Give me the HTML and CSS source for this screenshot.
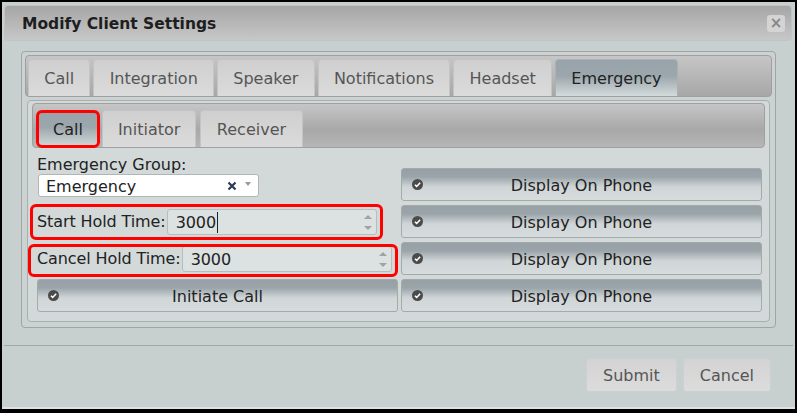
FILE: index.html
```html
<!DOCTYPE html>
<html lang="en">
<head>
  <meta charset="UTF-8">
  <title>Modify Client Settings</title>
  <link rel="stylesheet" href="styles.css">
</head>
<body>

<div class="dialog">
  <div class="titlebar">
    <h1>Modify Client Settings</h1>
    <span class="close">&times;</span>
  </div>

  <div class="tabs">
    <ul class="tab-strip">
      <li>Call</li>
      <li>Integration</li>
      <li>Speaker</li>
      <li>Notifications</li>
      <li>Headset</li>
      <li class="active">Emergency</li>
    </ul>

    <div class="panel">
      <ul class="tab-strip sub">
        <li class="active hl-tab">Call</li>
        <li>Initiator</li>
        <li>Receiver</li>
      </ul>

      <div class="form">
        <div class="group">
          <label>Emergency Group:</label>
          <div class="select">
            <span>Emergency</span>
            <svg class="clear" width="10" height="10" viewBox="0 0 10 10"><path d="M1.5 1.5 8.5 8.5M8.5 1.5 1.5 8.5" stroke="#2b3b52" stroke-width="2.2"/></svg>
            <span class="caret"></span>
          </div>
        </div>
        <button class="btn end">
          <svg class="ico" width="11" height="11" viewBox="0 0 12 12"><circle cx="6" cy="6" r="6" fill="#4b4b4b"/><path d="M3.2 6.3 5.1 8.1 8.9 4.1" fill="none" stroke="#fff" stroke-width="1.7"/></svg>
          <span>Display On Phone</span>
        </button>

        <div class="field hl">
          <label>Start Hold Time:</label>
          <div class="num">
            <span>3000</span><span class="cursor"></span>
            <span class="spin"><i class="up"></i><i class="down"></i></span>
          </div>
        </div>
        <button class="btn">
          <svg class="ico" width="11" height="11" viewBox="0 0 12 12"><circle cx="6" cy="6" r="6" fill="#4b4b4b"/><path d="M3.2 6.3 5.1 8.1 8.9 4.1" fill="none" stroke="#fff" stroke-width="1.7"/></svg>
          <span>Display On Phone</span>
        </button>

        <div class="field hl wide">
          <label>Cancel Hold Time:</label>
          <div class="num">
            <span>3000</span>
            <span class="spin"><i class="up"></i><i class="down"></i></span>
          </div>
        </div>
        <button class="btn">
          <svg class="ico" width="11" height="11" viewBox="0 0 12 12"><circle cx="6" cy="6" r="6" fill="#4b4b4b"/><path d="M3.2 6.3 5.1 8.1 8.9 4.1" fill="none" stroke="#fff" stroke-width="1.7"/></svg>
          <span>Display On Phone</span>
        </button>

        <button class="btn">
          <svg class="ico" width="11" height="11" viewBox="0 0 12 12"><circle cx="6" cy="6" r="6" fill="#4b4b4b"/><path d="M3.2 6.3 5.1 8.1 8.9 4.1" fill="none" stroke="#fff" stroke-width="1.7"/></svg>
          <span>Initiate Call</span>
        </button>
        <button class="btn">
          <svg class="ico" width="11" height="11" viewBox="0 0 12 12"><circle cx="6" cy="6" r="6" fill="#4b4b4b"/><path d="M3.2 6.3 5.1 8.1 8.9 4.1" fill="none" stroke="#fff" stroke-width="1.7"/></svg>
          <span>Display On Phone</span>
        </button>
      </div>
    </div>
  </div>

  <div class="footer">
    <button>Submit</button>
    <button>Cancel</button>
  </div>
</div>

</body>
</html>
```

FILE: styles.css
```css
body {
  margin: 0;
  background: #000;
  font-family: 'DejaVu Sans', sans-serif;
  font-size: 16px;
  color: #222;
}
.dialog {
  margin: 2px;
  width: 793px;
  height: 405px;
  background: #c8cfcf;
  border-bottom: 2px solid #dce1e1;
  overflow: hidden;
}
.titlebar {
  margin: 3px 3px 0 2px;
  height: 36px;
  box-sizing: border-box;
  display: flex;
  align-items: center;
  padding: 1px 6px 0 17px;
  border: 1px solid #bfc5c5;
  border-radius: 4px;
  background: linear-gradient(#a6a6a6, #c7c7c7);
}
.titlebar h1 {
  flex: 1;
  margin: 0;
  font-size: 15.5px;
  font-weight: bold;
  color: #1e1e1e;
}
.close {
  width: 18px;
  height: 17px;
  margin-top: -1px;
  display: flex;
  align-items: center;
  justify-content: center;
  background: #d4d4d4;
  border-radius: 3px;
  color: #868686;
  font-size: 15px;
  font-weight: bold;
  line-height: 1;
}

.tabs {
  margin: 10px 19px 0;
  padding: 3px;
  border: 1px solid #9ea5a5;
  border-radius: 4px;
  background: #ccd2d2;
}
.tab-strip {
  list-style: none;
  margin: 0;
  height: 42px;
  box-sizing: border-box;
  display: flex;
  align-items: stretch;
  gap: 3px;
  padding: 3px 2px 0;
  border: 1px solid #a0a0a0;
  border-radius: 4px;
  background: linear-gradient(#c6c6c6, #a7a7a7);
}
.tab-strip li {
  display: flex;
  align-items: center;
  padding: 1px 15.25px 0;
  border: 1px solid #c4c4c4;
  border-bottom: none;
  border-radius: 4px 4px 0 0;
  background: linear-gradient(#cfcfcf, #dbdbdb);
  color: #555;
}
.tab-strip li.active {
  background: linear-gradient(#99a4aa 0%, #9ca7ad 45%, #d3dadb 100%);
  border-color: #aab2b5;
  color: #222;
}

.panel {
  margin: 3px 2px 2px;
  padding: 2px 4px 9px;
  border: 1px solid #a8afaf;
  border-radius: 4px;
  background: #d3d9d9;
}
.tab-strip.sub {
  height: 45px;
  padding: 6px 4px 0;
  gap: 3px;
  background: linear-gradient(#c6c6c6, #a8a8a8 60%, #b6b6b6);
}
.tab-strip.sub li {
  padding: 1px 15px 0;
}
.tab-strip.sub li:last-child {
  margin-left: 1px;
  padding: 1px 15.5px 0;
}
.hl-tab, .hl {
  position: relative;
}
.hl-tab::after, .hl::after {
  content: '';
  position: absolute;
  border: 3px solid #ff0000;
  border-radius: 6px;
}
.hl-tab::after {
  left: -2px;
  right: -2px;
  top: -1px;
  bottom: -1px;
}
.hl::after {
  left: -7px;
  right: -6px;
  top: -5px;
  bottom: -5px;
}
.hl.wide::after {
  left: -9px;
  top: -2px;
}

.form {
  display: grid;
  grid-template-columns: 361px 361px;
  grid-template-rows: 48px 33px 33px 33px;
  gap: 4px 3px;
  margin: 5px 3px 0 5px;
}
.group {
  padding-top: 2px;
}
.group label {
  display: block;
  line-height: 19px;
}
.select {
  margin-left: 1px;
  width: 221px;
  height: 23px;
  box-sizing: border-box;
  display: flex;
  align-items: center;
  padding: 1px 7px 0;
  border: 1px solid #b0b6b6;
  border-radius: 3px;
  background: #fff;
}
.select .clear {
  margin-left: auto;
}
.select .caret {
  margin-left: 8px;
  border-left: 3px solid transparent;
  border-right: 3px solid transparent;
  border-top: 4px solid #9a9a9a;
  margin-top: -4px;
}

.field {
  justify-self: start;
  align-self: center;
  display: flex;
  align-items: center;
  gap: 1px;
  letter-spacing: -0.1px;
}
.num {
  width: 210px;
  height: 26px;
  box-sizing: border-box;
  display: flex;
  align-items: center;
  padding: 1px 0 0 8px;
  border: 1px solid #b7bdbd;
  border-radius: 3px;
  background: #dce1e2;
}
.cursor {
  width: 1px;
  height: 21px;
  margin-left: 1px;
  background: #222;
}
.spin {
  margin-left: auto;
  margin-right: 4px;
  display: flex;
  flex-direction: column;
  gap: 7px;
  padding-left: 3px;
}
.spin i {
  border-left: 4px solid transparent;
  border-right: 4px solid transparent;
}
.spin .up {
  border-bottom: 4px solid #a2a2a2;
}
.spin .down {
  border-top: 4px solid #a2a2a2;
}

.btn {
  display: grid;
  grid-template-columns: 1fr auto 1fr;
  align-items: center;
  padding: 1px 10px 0;
  border: 1px solid #a3aaaa;
  border-radius: 3px;
  background: linear-gradient(#96a0a6 0%, #9aa4a9 25%, #d0d6d8 58%, #d6dbdc 100%);
  font: inherit;
  color: #222;
}
.btn.end {
  align-self: end;
  height: 33px;
}
.btn .ico {
  justify-self: start;
  margin-top: -1px;
}

.footer {
  margin: 17px 2px 0;
  padding: 12px 22px 0 0;
  border-top: 1px solid #a2a8a8;
  display: flex;
  justify-content: flex-end;
  gap: 6px;
}
.footer button {
  height: 34px;
  padding: 1px 16px 0;
  border: 1px solid #ccd0d0;
  border-radius: 3px;
  background: linear-gradient(#d3d3d3, #dcdcdc);
  font: inherit;
  color: #555;
}
```
